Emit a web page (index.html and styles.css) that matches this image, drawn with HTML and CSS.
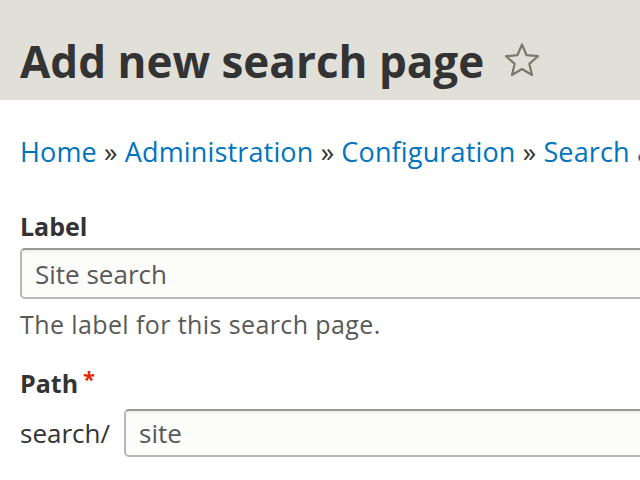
FILE: index.html
```html
<!DOCTYPE html>
<html>
<head>
<meta charset="utf-8">
<link rel="stylesheet" href="styles.css">
</head>
<body>
<header class="page-header">
  <h1 class="page-title">Add new search page<span class="shortcut"><svg width="38" height="36" viewBox="0 0 38 36"><path d="M19 2.5 L23.6 13.2 L35 14.2 L26.3 21.8 L29 33 L19 27 L9 33 L11.7 21.8 L3 14.2 L14.4 13.2 Z" fill="none" stroke="#7a7a6c" stroke-width="2.2" stroke-linejoin="round"/></svg></span></h1>
</header>
<main class="content">
  <nav class="breadcrumb"><a href="#">Home</a> <span class="sep">»</span> <a href="#">Administration</a> <span class="sep">»</span> <a href="#">Configuration</a> <span class="sep">»</span> <a href="#">Search and metadata</a></nav>
  <div class="form-item">
    <label class="form-label">Label</label>
    <input class="form-text" type="text" value="Site search">
    <div class="description">The label for this search page.</div>
  </div>
  <div class="form-item path-item">
    <label class="form-label">Path<span class="required">*</span></label>
    <div class="field-row">
      <span class="prefix">search/</span>
      <input class="form-text" type="text" value="site">
    </div>
  </div>
</main>
</body>
</html>
```

FILE: styles.css
```css
html, body {
  margin: 0;
  padding: 0;
  background: #ffffff;
  font-family: "Open Sans", "Noto Sans", sans-serif;
  color: #333333;
  overflow: hidden;
}
.page-header {
  background: #e0e0d8;
  height: 100px;
  box-sizing: border-box;
  padding: 31px 20px 0;
}
.page-title {
  margin: 0;
  font-size: 44px;
  line-height: 60px;
  font-weight: 700;
  color: #333333;
  white-space: nowrap;
  display: flex;
  align-items: center;
}
.shortcut {
  display: inline-flex;
  margin-left: 19px;
  margin-top: -2px;
}
.content {
  padding: 0 0 0 20px;
}
.breadcrumb {
  margin-top: 34px;
  font-size: 27px;
  letter-spacing: 0.15px;
  line-height: 36px;
  white-space: nowrap;
}
.breadcrumb a {
  color: #0074bd;
  text-decoration: none;
}
.breadcrumb .sep {
  color: #333333;
}
.form-item {
  margin-top: 40px;
}
.form-label {
  display: block;
  font-weight: 700;
  font-size: 25px;
  line-height: 32px;
  color: #333333;
}
.form-text {
  display: block;
  box-sizing: border-box;
  width: 700px;
  height: 51px;
  margin: 6px 0 0;
  padding: 0 13px;
  border: 2px solid #b8b8b8;
  border-top-color: #999999;
  border-radius: 5px;
  background: #fcfcfa;
  font-family: inherit;
  font-size: 26px;
  color: #595959;
  box-shadow: inset 0 2px 2px rgba(0,0,0,0.05);
  outline: none;
}
.description {
  font-size: 25px;
  letter-spacing: 0.4px;
  line-height: 30px;
  margin-top: 10px;
  color: #595959;
}
.path-item {
  margin-top: 28px;
}
.required {
  color: #e62600;
  font-size: 22px;
  margin-left: 5px;
  vertical-align: top;
  line-height: 22px;
}
.field-row {
  display: flex;
  align-items: center;
  margin-top: 10px;
}
.prefix {
  font-size: 26px;
  color: #333333;
  margin-right: 14px;
  white-space: nowrap;
}
.field-row .form-text {
  margin: 0;
  height: 48px;
  flex: 0 0 600px;
}
```
